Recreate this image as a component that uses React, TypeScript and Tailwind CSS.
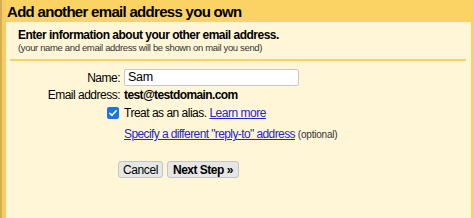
import React, { useState } from 'react';

const Check = () => (
    <svg viewBox="0 0 12 12" className="w-[10px] h-[10px]">
        <path d="M2.2 6.3 L4.8 8.8 L9.8 3.4" fill="none" stroke="#fff" strokeWidth="1.9" strokeLinecap="round" strokeLinejoin="round" />
    </svg>
);

export default function App() {
    const [name, setName] = useState('Sam');
    const [alias, setAlias] = useState(true);

    return (
        <div className="w-[474px] h-[218px] overflow-hidden flex bg-[#fff6d8] text-black" style={{ fontFamily: '"Liberation Sans", Arial, sans-serif' }}>
            {/* left edge */}
            <div className="w-[2px] shrink-0 bg-[#d6ad52]" />
            <div className="w-[4px] shrink-0 bg-[#f6cd62]" />

            <div className="flex-1 flex flex-col min-w-0">
                <div className="h-[22px] shrink-0 bg-[#fbd365] flex items-end pl-[1px] pb-[3px]">
                    <h1 className="text-[15px] tracking-[-0.7px] font-bold leading-none">Add another email address you own</h1>
                </div>

                <div className="flex-1 pl-[4px] pr-[5px]">
                    <div className="px-[8px] pt-[7px] pb-[6px] border-b-[2px] border-[#fad163]">
                        <p className="text-[12px] tracking-[-0.5px] font-bold leading-[13px]">Enter information about your other email address.</p>
                        <p className="text-[9.5px] tracking-[-0.35px] leading-[11px] text-[#333]">(your name and email address will be shown on mail you send)</p>
                    </div>

                    <div className="grid grid-cols-[110px_1fr] grid-rows-[17px_17px_20px_22px] gap-x-[4px] mt-[8px] text-[12px] tracking-[-0.5px] items-center">
                        <label className="text-right">Name:</label>
                        <input
                            value={name}
                            onChange={e => setName(e.target.value)}
                            className="w-[175px] h-[17px] bg-white border border-[#c8c8c8] rounded-[2px] px-[3px] text-[12.5px] tracking-[-0.3px] outline-none"
                        />

                        <span className="text-right">Email address:</span>
                        <span className="font-bold tracking-[-0.6px]">test@testdomain.com</span>

                        <span className="flex justify-end pr-[1px]">
                            <button
                                onClick={() => setAlias(!alias)}
                                className={`w-[12px] h-[12px] rounded-[2px] flex items-center justify-center ${alias ? 'bg-[#1a73e8]' : 'bg-white border border-[#888]'}`}
                            >
                                {alias && <Check />}
                            </button>
                        </span>
                        <span>
                            Treat as an alias. <a href="#" className="text-[#2525cc] underline">Learn more</a>
                        </span>

                        <span />
                        <span>
                            <a href="#" className="text-[#2525cc] underline tracking-[-0.6px]">Specify a different "reply-to" address</a>{' '}
                            <span className="text-[10px] tracking-[-0.2px] text-[#333]">(optional)</span>
                        </span>
                    </div>

                    <div className="flex gap-[4px] ml-[108px] mt-[16px] text-[12px] tracking-[-0.4px]">
                        <button className="h-[17px] px-[4px] bg-[#e6e6e6] border border-[#c4c4c4] rounded-[3px] leading-none">Cancel</button>
                        <button className="h-[17px] px-[5px] bg-[#e6e6e6] border border-[#c4c4c4] rounded-[3px] font-bold leading-none tracking-[-0.5px]">Next Step »</button>
                    </div>
                </div>
            </div>

            {/* right edge */}
            <div className="w-[3px] shrink-0 bg-[#fad163]" />
        </div>
    );
}
